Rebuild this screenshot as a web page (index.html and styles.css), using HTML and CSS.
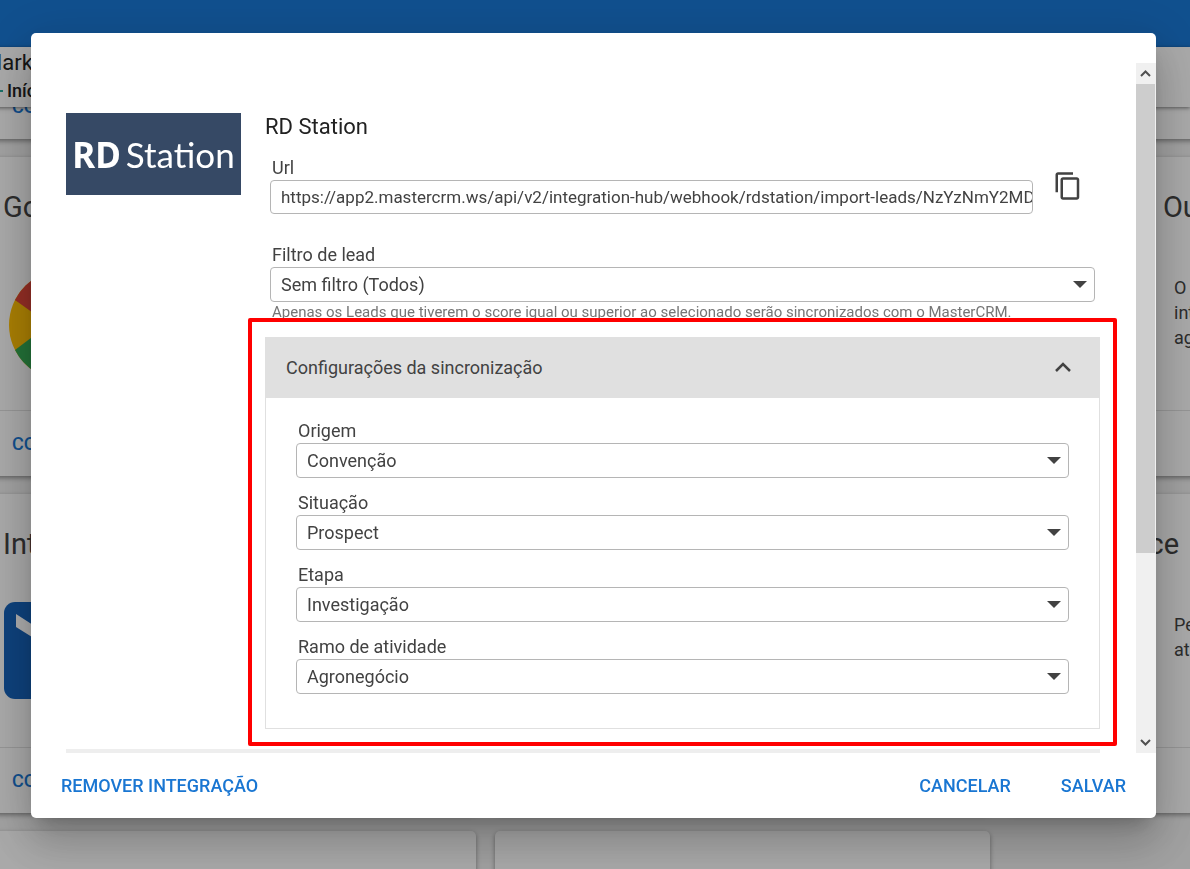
FILE: index.html
```html
<!DOCTYPE html>
<html lang="pt-BR">
<head>
    <meta charset="UTF-8">
    <meta name="viewport" content="width=device-width, initial-scale=1.0">
    <link rel="stylesheet" href="styles.css">
    <title>RD Station</title>
</head>
<body>
    <div class="page">
        <div class="topbar"></div>
        <header class="page-header">
            <h1>Mark</h1>
            <nav class="crumbs">
                <svg width="20" height="16" viewBox="0 0 20 16"><path d="M2 8h18M15 4v8" fill="none" stroke="#26a69a" stroke-width="2"/></svg>
                <span>Iníc</span>
            </nav>
        </header>
        <main class="cards">
            <section class="card"><div class="card-actions"><a href="#">CO</a></div></section>
            <section class="card"><div class="card-actions"></div></section>
            <section class="card"><div class="card-actions"></div></section>

            <section class="card">
                <h2>Go</h2>
                <div class="card-body">
                    <svg width="120" height="120" viewBox="0 0 120 120">
                        <circle cx="60" cy="62" r="55" fill="#fbbc05"/>
                        <path d="M60 62L11 37A55 55 0 0 1 115 62z" fill="#db4437"/>
                        <path d="M11 37L60 72V40z" fill="#db4437"/>
                        <path d="M60 50L11 87A55 55 0 0 0 60 117z" fill="#34a853"/>
                        <circle cx="60" cy="62" r="24" fill="#4285f4" stroke="#fff" stroke-width="5"/>
                    </svg>
                </div>
                <div class="card-actions"><a href="#">CO</a></div>
            </section>
            <section class="card"><div class="card-body"></div><div class="card-actions"></div></section>
            <section class="card">
                <h2>Microsoft Ou</h2>
                <div class="card-body">
                    <div class="media"></div>
                    <p>O<br>int<br>ag</p>
                </div>
                <div class="card-actions"></div>
            </section>

            <section class="card">
                <h2>Int</h2>
                <div class="card-body">
                    <svg width="120" height="120" viewBox="0 0 120 120">
                        <rect x="0" y="2" width="120" height="97" rx="11" fill="#1561b8"/>
                        <path d="M12 14l48 31 48-31v13L60 57 12 27z" fill="#fff"/>
                    </svg>
                </div>
                <div class="card-actions"><a href="#">CO</a></div>
            </section>
            <section class="card"><div class="card-body"></div><div class="card-actions"></div></section>
            <section class="card">
                <h2>Conference</h2>
                <div class="card-body">
                    <div class="media"></div>
                    <p>Pe<br>at</p>
                </div>
                <div class="card-actions"></div>
            </section>

            <section class="card"><div class="card-body"></div></section>
            <section class="card"><div class="card-body"></div></section>
        </main>
    </div>

    <div class="overlay">
        <div class="dialog" role="dialog" aria-label="RD Station">
            <div class="dialog-scroll">
                <div class="dialog-content">
                    <div class="integration">
                        <div class="logo"><b>RD</b><span>Station</span></div>
                        <form class="form" id="form">
                            <h3>RD Station</h3>
                            <div class="row">
                                <div class="field">
                                    <label for="url">Url</label>
                                    <input id="url" type="text" readonly value="https://app2.mastercrm.ws/api/v2/integration-hub/webhook/rdstation/import-leads/NzYzNmY2MDE">
                                </div>
                                <button type="button" class="copy" aria-label="Copiar">
                                    <svg width="30" height="30" viewBox="0 0 24 24"><path d="M16 1H4c-1.100 0-2 .9-2 2v14h2V3h12V1zm3 4H8c-1.100 0-2 .9-2 2v14c0 1.100.9 2 2 2h11c1.100 0 2-.9 2-2V7c0-1.100-.9-2-2-2zm0 16H8V7h11v14z" fill="#424242"/></svg>
                                </button>
                            </div>
                            <div class="field filter">
                                <label for="filtro">Filtro de lead</label>
                                <div class="select"><select id="filtro"><option>Sem filtro (Todos)</option></select></div>
                                <small>Apenas os Leads que tiverem o score igual ou superior ao selecionado serão sincronizados com o MasterCRM.</small>
                            </div>
                            <div class="panel">
                                <button type="button" class="panel-header">
                                    <span>Configurações da sincronização</span>
                                    <svg width="16" height="10" viewBox="0 0 16 10"><path d="M1 9l7-7 7 7" fill="none" stroke="#424242" stroke-width="2.500"/></svg>
                                </button>
                                <div class="panel-body">
                                    <div class="field">
                                        <label for="origem">Origem</label>
                                        <div class="select"><select id="origem"><option>Convenção</option></select></div>
                                    </div>
                                    <div class="field">
                                        <label for="situacao">Situação</label>
                                        <div class="select"><select id="situacao"><option>Prospect</option></select></div>
                                    </div>
                                    <div class="field">
                                        <label for="etapa">Etapa</label>
                                        <div class="select"><select id="etapa"><option>Investigação</option></select></div>
                                    </div>
                                    <div class="field">
                                        <label for="ramo">Ramo de atividade</label>
                                        <div class="select"><select id="ramo"><option>Agronegócio</option></select></div>
                                    </div>
                                </div>
                                <div class="highlight"></div>
                            </div>
                        </form>
                    </div>
                    <hr>
                </div>
                <div class="scrollbar">
                    <svg width="20" height="21" viewBox="0 0 20 21"><path d="M5 13l4.500-4.500L14 13" fill="none" stroke="#505050" stroke-width="2"/></svg>
                    <div class="thumb"></div>
                    <svg width="20" height="21" viewBox="0 0 20 21"><path d="M5 8l4.500 4.500L14 8" fill="none" stroke="#505050" stroke-width="2"/></svg>
                </div>
            </div>
            <div class="dialog-actions">
                <button type="button">REMOVER INTEGRAÇÃO</button>
                <button type="button" class="cancel">CANCELAR</button>
                <button type="submit" form="form">SALVAR</button>
            </div>
        </div>
    </div>
</body>
</html>
```
FILE: styles.css
```css
*{
    box-sizing: border-box;
}

body{
    margin: 0;
    height: 100vh;
    overflow: hidden;
    background-color: #eee;
    font-family: Roboto, "Liberation Sans", sans-serif;
    font-size: 18px;
    color: #424242;
}

h1, h2, h3, p{
    margin: 0;
    font-weight: 400;
}

input, select, button{
    font: inherit;
    color: inherit;
}

button{
    padding: 0;
    border: none;
    background: none;
    cursor: pointer;
}

/* page behind the dialog, scrolled a little to the side */
.page{
    height: 100vh;
    margin-left: -19px;
    overflow: hidden;
}

.topbar{
    height: 47px;
    background-color: #1976d2;
}

.page-header{
    position: relative;
    z-index: 1;
    height: 60px;
    padding-left: 2px;
    background-color: #fafafa;
    box-shadow: 0 1px 4px rgba(0, 0, 0, 0.5);
    color: #212121;
}

.page-header h1{
    font-size: 22px;
    line-height: 32px;
}

.crumbs{
    display: flex;
    align-items: center;
    gap: 4px;
    font-weight: 500;
    line-height: 24px;
}

.cards{
    display: grid;
    grid-template-columns: repeat(3, 495px);
    gap: 18px 19px;
    margin-top: -34px;
}

.card{
    display: flex;
    flex-direction: column;
    border-radius: 5px;
    background-color: #fafafa;
    box-shadow: 0 2px 5px rgba(0, 0, 0, 0.4);
}

.card h2{
    padding: 33px 22px 0;
    font-size: 29px;
    line-height: 34px;
    white-space: nowrap;
}

.card-body{
    display: flex;
    flex: 1;
    gap: 22px;
    min-height: 186px;
    padding: 39px 23px 0;
}

.card-body p{
    padding-top: 12px;
    line-height: 25px;
    white-space: nowrap;
}

.media{
    width: 120px;
}

.card-actions{
    display: flex;
    align-items: center;
    height: 66px;
    padding: 0 31px;
    border-top: 1px solid #ddd;
}

.card-actions a{
    color: #1976d2;
    font-weight: 500;
    text-decoration: none;
}

/* dialog */
.overlay{
    position: fixed;
    inset: 0;
    z-index: 2;
    padding: 33px 34px 0 31px;
    background-color: rgba(0, 0, 0, 0.32);
}

.dialog{
    padding-top: 30px;
    border-radius: 5px;
    background-color: #fff;
    box-shadow: 0 12px 17px -8px rgba(0, 0, 0, 0.2), 0 27px 43px 3px rgba(0, 0, 0, 0.14), 0 10px 52px 9px rgba(0, 0, 0, 0.12);
}

.dialog-scroll{
    display: flex;
}

.dialog-content{
    flex: 1;
    min-width: 0;
    padding: 50px 36px 0 35px;
}

.integration{
    display: flex;
    align-items: flex-start;
    gap: 24px;
}

.logo{
    display: flex;
    align-items: baseline;
    justify-content: center;
    gap: 5px;
    width: 175px;
    height: 82px;
    background-color: #364965;
    font-family: "Noto Sans", sans-serif;
    font-size: 35px;
    line-height: 82px;
    color: #fff;
}

.logo span{
    font-family: Lato, sans-serif;
}

.form{
    flex: 1;
    min-width: 0;
}

.form h3{
    font-size: 22px;
    line-height: 27px;
    color: #212121;
}

.row{
    display: flex;
    align-items: flex-end;
    gap: 20px;
    padding: 16px 17px 0 5px;
}

.row .field{
    flex: 1;
}

.field label{
    display: block;
    padding-left: 2px;
    line-height: 24px;
}

.field input, .field select{
    display: block;
    width: 100%;
    height: 35px;
    padding: 0 0 0 10px;
    border: 1px solid #b5b5b5;
    border-radius: 4px;
    background-color: #fff;
    appearance: none;
    outline: none;
}

.field input{
    height: 34px;
    font-size: 17px;
}

.copy{
    height: 52px;
}

.select{
    position: relative;
}

.select::after{
    content: "";
    position: absolute;
    top: 14px;
    right: 8px;
    border: 7px solid transparent;
    border-top-color: #424242;
    border-bottom: none;
    pointer-events: none;
}

.filter{
    padding: 29px 5px 0;
}

.field small{
    display: block;
    padding-left: 2px;
    font-size: 15px;
    line-height: 20px;
    color: #757575;
}

.panel{
    position: relative;
    margin-top: 15px;
    border: 1px solid #e0e0e0;
}

.panel-header{
    display: flex;
    align-items: center;
    justify-content: space-between;
    width: 100%;
    height: 60px;
    padding: 0 28px 2px 20px;
    background-color: #e0e0e0;
}

.panel-body{
    display: flex;
    flex-direction: column;
    gap: 13px;
    padding: 21px 30px 34px;
}

.highlight{
    position: absolute;
    inset: -20px -18px -18px;
    border: 4px solid #f00;
    border-radius: 2px;
    pointer-events: none;
}

hr{
    height: 4px;
    margin: 20px 0 0;
    border: none;
    background-color: #eee;
}

.scrollbar{
    display: flex;
    flex-direction: column;
    width: 20px;
    background-color: #f0f0f0;
}

.scrollbar svg:last-child{
    margin-top: auto;
}

.thumb{
    height: 68%;
    margin-right: 1px;
    background-color: #cdcdcd;
}

.dialog-actions{
    display: flex;
    gap: 50px;
    height: 65px;
    padding: 0 30px;
    color: #1976d2;
}

.dialog-actions button{
    font-weight: 500;
}

.dialog-actions .cancel{
    margin-left: auto;
}
```
